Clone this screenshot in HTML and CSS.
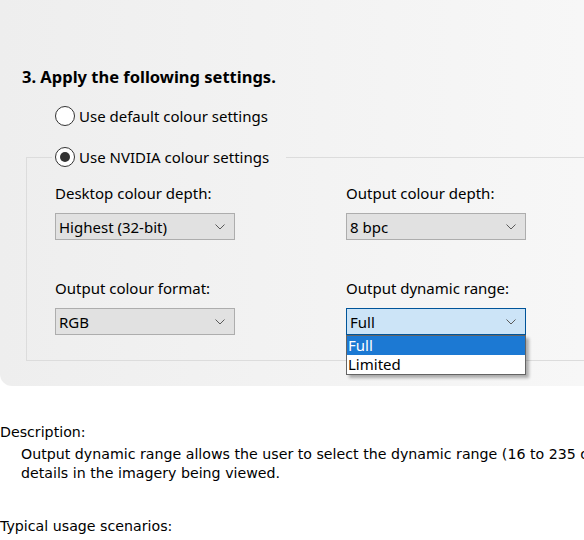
FILE: index.html
```html
<!DOCTYPE html>
<html>
<head>
<meta charset="utf-8">
<link rel="stylesheet" href="styles.css">
</head>
<body>
<div class="panel">
  <h2 class="heading">3. Apply the following settings.</h2>
  <div class="radio"><span class="dot"></span><span>Use default colour settings</span></div>
  <fieldset class="group">
    <legend class="legend"><div class="radio"><span class="dot checked"></span><span>Use NVIDIA colour settings</span></div></legend>
    <div class="grid">
      <div class="field">
        <div class="label">Desktop colour depth:</div>
        <div class="select"><span>Highest (32-bit)</span><svg class="chev" width="10" height="6" viewBox="0 0 10 6"><path d="M0.5 0.5 L5 5 L9.5 0.5" fill="none" stroke="#5a5a5a" stroke-width="1"/></svg></div>
      </div>
      <div class="field">
        <div class="label">Output colour depth:</div>
        <div class="select"><span>8 bpc</span><svg class="chev" width="10" height="6" viewBox="0 0 10 6"><path d="M0.5 0.5 L5 5 L9.5 0.5" fill="none" stroke="#5a5a5a" stroke-width="1"/></svg></div>
      </div>
      <div class="field">
        <div class="label">Output colour format:</div>
        <div class="select"><span>RGB</span><svg class="chev" width="10" height="6" viewBox="0 0 10 6"><path d="M0.5 0.5 L5 5 L9.5 0.5" fill="none" stroke="#5a5a5a" stroke-width="1"/></svg></div>
      </div>
      <div class="field">
        <div class="label">Output dynamic range:</div>
        <div class="combo">
          <div class="select active"><span>Full</span><svg class="chev" width="10" height="6" viewBox="0 0 10 6"><path d="M0.5 0.5 L5 5 L9.5 0.5" fill="none" stroke="#5a5a5a" stroke-width="1"/></svg></div>
          <ul class="list">
            <li class="opt sel">Full</li>
            <li class="opt">Limited</li>
          </ul>
        </div>
      </div>
    </div>
  </fieldset>
</div>
<div class="desc">
  <div class="desc-title">Description:</div>
  <p class="desc-body">Output dynamic range allows the user to select the dynamic range (16 to 235 or 0 to 255) that will best display<br>details in the imagery being viewed.</p>
  <div class="desc-title usage">Typical usage scenarios:</div>
</div>
</body>
</html>
```
FILE: styles.css
```css
html, body {
  margin: 0;
  padding: 0;
  background: #ffffff;
  overflow: hidden;
}
body {
  width: 584px;
  height: 540px;
  font-family: "Noto Sans", "Open Sans", sans-serif;
  color: #000000;
}
.panel {
  background: linear-gradient(to right, #eeeeee, #f7f7f7);
  border-bottom-left-radius: 12px;
  padding: 66px 0 25px 0;
  overflow: hidden;
}
.heading {
  margin: 0 0 19px 22px;
  font-size: 16.5px;
  font-weight: 700;
  line-height: 21px;
}
.radio {
  display: flex;
  align-items: center;
  gap: 4px;
  height: 20px;
  font-size: 15px;
  line-height: 20px;
  margin-left: 55px;
}
.legend .radio {
  margin-left: 0;
}
.dot {
  width: 18px;
  height: 18px;
  border: 1px solid #333333;
  border-radius: 50%;
  background: #ffffff;
  display: flex;
  align-items: center;
  justify-content: center;
  flex: none;
}
.dot.checked::after {
  content: "";
  width: 10px;
  height: 10px;
  border-radius: 50%;
  background: #333333;
}
.group {
  margin: 21px 0 0 26px;
  width: 640px;
  border: 1px solid #dcdcdc;
  padding: 16px 0 25px 28px;
  min-width: 0;
}
.legend {
  padding: 0 17px 0 3px;
  margin-left: -3px;
}
.grid {
  display: grid;
  grid-template-columns: 291px 291px;
  row-gap: 38px;
}
.label {
  font-size: 15px;
  line-height: 20px;
  margin-bottom: 10px;
}
.combo {
  position: relative;
  width: 180px;
}
.select {
  width: 180px;
  height: 27px;
  box-sizing: border-box;
  border: 1px solid #adadad;
  background: #e1e1e1;
  display: flex;
  align-items: center;
  justify-content: space-between;
  padding: 1px 9px 0 3px;
  font-size: 15px;
  line-height: 20px;
}
.select.active {
  border-color: #005499;
  background: #cce4f7;
}
.chev {
  display: block;
  margin-top: -1px;
}
.list {
  position: absolute;
  top: 27px;
  left: 0;
  width: 180px;
  box-sizing: border-box;
  margin: 0;
  padding: 0;
  list-style: none;
  background: #ffffff;
  border: 1px solid #646464;
  box-shadow: 3px 3px 3px rgba(0, 0, 0, 0.3);
}
.opt {
  height: 19px;
  line-height: 19px;
  font-size: 15px;
  padding-left: 1px;
}
.opt.sel {
  background: #1c79d3;
  color: #ffffff;
}
.desc {
  font-family: "DejaVu Sans", sans-serif;
  font-size: 14.2px;
  line-height: 19px;
  padding-top: 37px;
  white-space: nowrap;
}
.desc-title {
  margin: 0;
}
.desc-body {
  margin: 3px 0 0 21px;
}
.usage {
  margin-top: 34px;
}
```
